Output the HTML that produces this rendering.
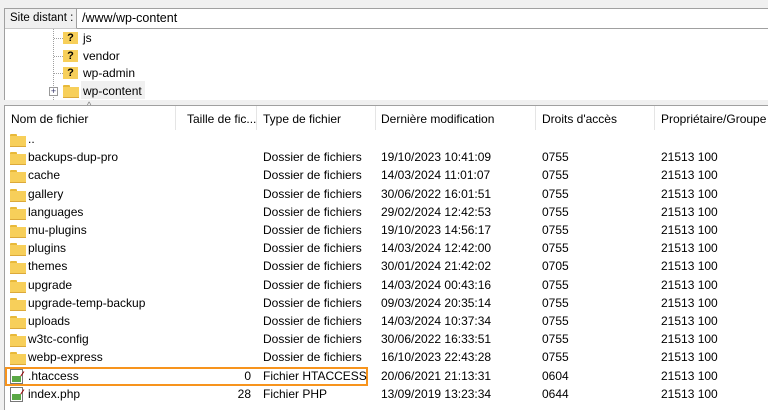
<!DOCTYPE html>
<html><head><meta charset="utf-8"><style>
*{margin:0;padding:0;box-sizing:border-box}
body{width:768px;height:410px;overflow:hidden;background:#f0f0f0;font-family:"Liberation Sans",sans-serif;font-size:12px;color:#000;position:relative}
.abs{position:absolute;white-space:nowrap}
.fold{position:absolute;width:16px;height:12px}
.fold:before{content:"";position:absolute;left:0;top:0;width:7px;height:3px;background:#e8b93a;border-radius:1px 1px 0 0}
.fold:after{content:"";position:absolute;left:0;top:2px;width:16px;height:10px;background:#f7cf5a;border-bottom:1px solid #dca93a}
.q{position:absolute;width:15px;height:12px;background:#f7cf5a;font-weight:bold;font-size:11px;line-height:12px;text-align:center}
.file{position:absolute;width:13px;height:15px;background:#fff;border:1px solid #777}
.file:after{content:"";position:absolute;left:1px;right:1px;bottom:1px;height:6px;background:#5aa845}
.file:before{content:"";position:absolute;top:1px;left:4px;width:9px;height:1px;background:#900;transform:rotate(-55deg);transform-origin:right}
.sep{position:absolute;top:106px;width:1px;height:24px;background:#e5e5e5}
</style></head><body>
<div class="abs" style="left:4px;top:8px;width:764px;height:92px;background:#fff;border-top:1px solid #a0a0a0;border-left:1px solid #a0a0a0"></div>
<div class="abs" style="left:5px;top:9px;width:72px;height:20px;background:#f0f0f0;border-right:1px solid #a0a0a0;border-bottom:1px solid #c8c8c8"></div>
<div class="abs" style="left:10px;top:12px;font-size:11.5px">Site distant :</div>
<div class="abs" style="left:77px;top:28px;width:691px;height:1px;background:#a0a0a0"></div>
<div class="abs" style="left:82px;top:11px;font-size:12.5px">/www/wp-content</div>
<div class="abs" style="left:53px;top:29px;width:0;height:71px;border-left:1px dotted #a0a0a0"></div>
<div class="abs" style="left:54px;top:38px;width:9px;border-top:1px dotted #a0a0a0"></div>
<div class="abs" style="left:54px;top:56px;width:9px;border-top:1px dotted #a0a0a0"></div>
<div class="abs" style="left:54px;top:73px;width:9px;border-top:1px dotted #a0a0a0"></div>
<div class="abs" style="left:49px;top:87px;width:9px;height:9px;border:1px solid #999;background:#fff;font-size:9px;line-height:7px;text-align:center;color:#336">+</div>
<div class="q" style="left:63px;top:32px">?</div><div class="abs" style="left:83px;top:31px">js</div>
<div class="q" style="left:63px;top:50px">?</div><div class="abs" style="left:83px;top:49px">vendor</div>
<div class="q" style="left:63px;top:67px">?</div><div class="abs" style="left:83px;top:66px">wp-admin</div>
<div class="abs" style="left:81px;top:81px;width:64px;height:18px;background:#f0f0f0"></div>
<div class="fold" style="left:63px;top:85px"></div><div class="abs" style="left:83px;top:84px">wp-content</div>
<div class="abs" style="left:4px;top:105px;width:764px;height:305px;background:#fff;border-top:1px solid #a0a0a0;border-left:1px solid #a0a0a0"></div>
<div class="abs" style="left:87px;top:100px;font-size:9px;color:#777">^</div>
<div class="sep" style="left:175px"></div><div class="sep" style="left:256px"></div><div class="sep" style="left:375px"></div><div class="sep" style="left:535px"></div><div class="sep" style="left:654px"></div>
<div class="abs" style="left:11px;top:112px">Nom de fichier</div>
<div class="abs" style="left:187px;top:112px">Taille de fic...</div>
<div class="abs" style="left:263px;top:112px">Type de fichier</div>
<div class="abs" style="left:381px;top:112px">Dernière modification</div>
<div class="abs" style="left:542px;top:112px">Droits d'accès</div>
<div class="abs" style="left:661px;top:112px">Propriétaire/Groupe</div>
<div class="abs" style="left:5px;top:367px;width:363px;height:19px;border:2px solid #f7941d"></div>
<div id="rows"></div>
<script>
var r=[["..","","","","",""],
["backups-dup-pro","","Dossier de fichiers","19/10/2023 10:41:09","0755","21513 100"],
["cache","","Dossier de fichiers","14/03/2024 11:01:07","0755","21513 100"],
["gallery","","Dossier de fichiers","30/06/2022 16:01:51","0755","21513 100"],
["languages","","Dossier de fichiers","29/02/2024 12:42:53","0755","21513 100"],
["mu-plugins","","Dossier de fichiers","19/10/2023 14:56:17","0755","21513 100"],
["plugins","","Dossier de fichiers","14/03/2024 12:42:00","0755","21513 100"],
["themes","","Dossier de fichiers","30/01/2024 21:42:02","0705","21513 100"],
["upgrade","","Dossier de fichiers","14/03/2024 00:43:16","0755","21513 100"],
["upgrade-temp-backup","","Dossier de fichiers","09/03/2024 20:35:14","0755","21513 100"],
["uploads","","Dossier de fichiers","14/03/2024 10:37:34","0755","21513 100"],
["w3tc-config","","Dossier de fichiers","30/06/2022 16:33:51","0755","21513 100"],
["webp-express","","Dossier de fichiers","16/10/2023 22:43:28","0755","21513 100"],
[".htaccess","0","Fichier HTACCESS","20/06/2021 21:13:31","0604","21513 100"],
["index.php","28","Fichier PHP","13/09/2019 13:23:34","0644","21513 100"]];
var h="";
r.forEach(function(x,i){var y=Math.round(131+i*18.2);
var ic=i>=13?'<div class="file" style="left:10px;top:'+(y+1)+'px"></div>':'<div class="fold" style="left:10px;top:'+(y+3)+'px"></div>';
h+=ic+'<div class="abs" style="left:28px;top:'+(y+1)+'px">'+x[0]+'</div>'
+'<div class="abs" style="left:180px;width:71px;text-align:right;top:'+(y+1)+'px">'+x[1]+'</div>'
+'<div class="abs" style="left:263px;top:'+(y+1)+'px">'+x[2]+'</div>'
+'<div class="abs" style="left:381px;top:'+(y+1)+'px">'+x[3]+'</div>'
+'<div class="abs" style="left:542px;top:'+(y+1)+'px">'+x[4]+'</div>'
+'<div class="abs" style="left:661px;top:'+(y+1)+'px">'+x[5]+'</div>';});
document.getElementById("rows").innerHTML=h;
</script>
</body></html>
